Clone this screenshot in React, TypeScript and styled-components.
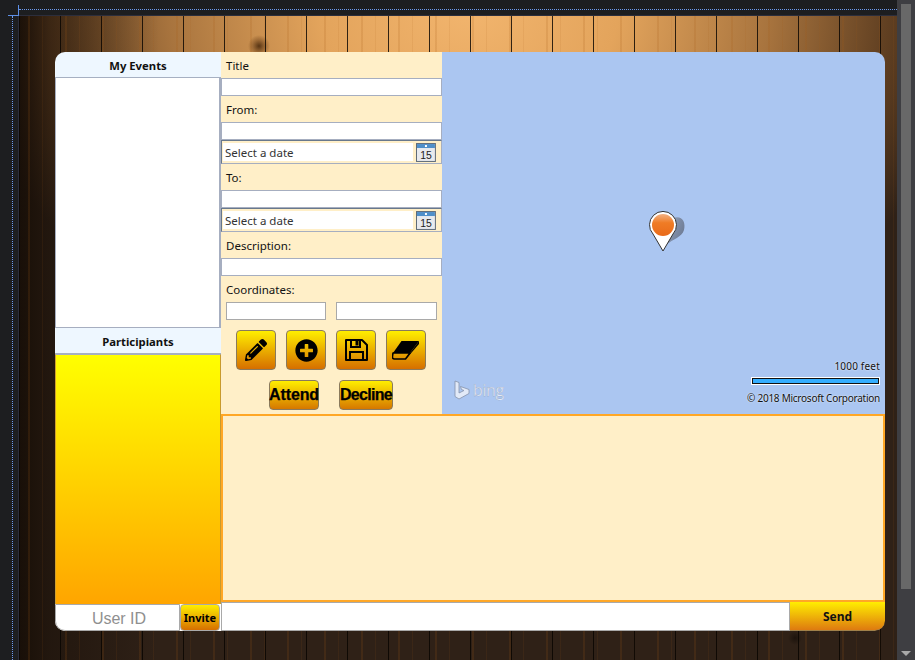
import React from "react";
import styled, { createGlobalStyle } from "styled-components";
import { FaPencilAlt, FaPlusCircle } from "react-icons/fa";

const Global = createGlobalStyle`
  html, body { margin: 0; padding: 0; height: 660px; overflow: hidden; background: #1d1e20; }
  * { box-sizing: border-box; }
  body { font-family: "Noto Sans", "Open Sans", sans-serif; font-size: 11.5px; color: #111; }
`;

const Shell = styled.div`
  width: 915px; height: 660px; display: grid;
  grid-template-columns: 19px 878px 18px;
  grid-template-rows: 16px 644px;
  background: #1d1e20;
`;
const Corner = styled.div`
  position: relative; background: #1d1e20;
  &::before { content: ""; position: absolute; left: 8px; right: 0; bottom: 0; border-bottom: 1px solid #5d8fe6; }
  &::after { content: ""; position: absolute; right: 0; top: 5px; bottom: 0; border-right: 1px solid #5d8fe6; }
`;
const TopRuler = styled.div`
  position: relative; background: #1d1e20; border-bottom: 1px solid #2c2e3c;
  &::after { content: ""; position: absolute; left: 0; right: 0; top: 9px; border-top: 1px dotted #6d9bf0; }
`;
const SideRuler = styled.div`
  position: relative; background: #1d1e20; border-right: 1px solid #2c2e3c;
  &::after { content: ""; position: absolute; left: 12px; top: 0; bottom: 0; border-left: 1px dotted #6d9bf0; }
`;
const Scroll = styled.div`
  grid-column: 3; grid-row: 1 / 3; position: relative; background: #3e3e42;
`;
const Thumb = styled.div`
  position: absolute; left: 4px; top: 4px; width: 10px; height: 585px; background: #686868;
`;
const Arrow = styled.div`
  position: absolute; left: 4px; bottom: 4px; width: 0; height: 0;
  border-left: 5px solid transparent; border-right: 5px solid transparent; border-top: 5px solid #a9a9a9;
`;

const Wood = styled.div`
  padding: 36px 0 0 36px;
  background:
    repeating-linear-gradient(90deg, rgba(8,4,0,.82) 0 1px, transparent 1px 41px),
    radial-gradient(circle 11px at 240px 30px, rgba(60,30,5,.8) 0, rgba(90,50,15,.4) 55%, rgba(120,70,20,0) 100%),
    radial-gradient(circle 7px at 776px 622px, rgba(10,5,2,.5) 0, rgba(10,5,2,0) 100%),
    repeating-linear-gradient(90deg, transparent 0 9px, rgba(165,90,20,.16) 9px 11px, transparent 11px 23px, rgba(165,90,20,.1) 23px 24px, transparent 24px 37px),
    linear-gradient(90deg, rgba(22,13,6,.9) 0, rgba(22,13,6,.5) 30px, rgba(22,13,6,0) 140px),
    radial-gradient(ellipse 500px 400px at 450px -10px, #f2b56e 0, #e3a45c 30%, #a8743e 60%, #5d3d20 85%, #2f2117 100%),
    #2f2117;
  background-color: #2f2117;
`;

const Panel = styled.div`
  width: 830px; height: 579px;
  display: grid; grid-template-columns: 166px 664px;
  border-radius: 10px; overflow: hidden;
`;
const LeftCol = styled.div`
  display: flex; flex-direction: column; width: 166px;
`;
const Head = styled.div`
  height: 26px; background: #eef7ff; border-bottom: 1px solid #a6b0c2; padding-top: 1px;
  display: flex; align-items: center; justify-content: center;
  font-weight: 700; font-size: 11.3px; color: #111;
`;
const EventList = styled.div`
  height: 250px; background: #fff; border: solid #a6aec0; border-width: 0 2px 1px 1px;
`;
const Yellow = styled.div`
  height: 250px; background: linear-gradient(180deg, #ffff00 0%, #ffa500 100%);
  border-right: 1px solid #c89a2e; border-left: 1px solid #d0a030; border-top: 1px solid #a6b0c2;
`;
const UserRow = styled.div`
  height: 27px; display: flex; align-items: stretch; background: #fff;
`;
const UserInput = styled.div`
  width: 125px; background: #fff; border: 1px solid #a9a9a9;
  border-bottom-left-radius: 10px; display: flex; align-items: center; justify-content: center;
  font-family: "Liberation Sans", Arial, sans-serif; font-size: 16px; color: #8f8f8f; padding: 2px 0 0 3px;
`;
const GoldBtn = styled.div<{ $w: number; $h: number }>`
  width: ${p => p.$w}px; height: ${p => p.$h}px; border-radius: 4px;
  background: linear-gradient(180deg, #ffee00 0%, #d66f00 100%);
  border: 1px solid #8a7a5c; display: flex; align-items: center; justify-content: center;
  color: #000; flex: none;
`;
const InviteBtn = styled(GoldBtn)`
  font-weight: 700; font-size: 11px; border-color: #aaa; margin-right: 1px;
`;

const RightCol = styled.div`
  display: grid; grid-template-rows: 362px 188px 29px; width: 664px;
`;
const TopRow = styled.div`
  display: grid; grid-template-columns: 221px 443px;
`;
const Form = styled.div`
  background: #ffefc8; display: flex; flex-direction: column; padding-bottom: 4px;
`;
const Label = styled.div`
  height: 26px; line-height: 27px; padding-left: 5px; color: #111;
`;
const Field = styled.div`
  height: 18px; width: 221px; background: #fff; border: 1px solid #a6aec0;
`;
const DateBox = styled.div`
  height: 24px; width: 221px; border: 1px solid #a6aec0; border-top: 1px solid #68788c;
  border-left-color: #68788c; background: #ffefc8; padding: 2px 5px 2px 1px;
  display: flex; align-items: center; gap: 3px;
`;
const DateText = styled.div`
  width: 191px; height: 18px; background: #fff; padding-left: 2px; line-height: 20px; color: #333;
`;
const CoordRow = styled.div`
  display: flex; gap: 10px; padding-left: 5px;
`;
const CoordField = styled.div<{ $w: number }>`
  width: ${p => p.$w}px; height: 18px; background: #fff; border: 1px solid #a9a9a9;
`;
const IconRow = styled.div`
  display: flex; gap: 10px; padding: 10px 0 0 15px;
`;
const WordRow = styled.div`
  display: flex; gap: 20px; padding: 10px 0 0 48px;
`;
const WordBtn = styled(GoldBtn)<{ $track: number }>`
  font-family: "Liberation Sans", Arial, sans-serif;
  font-weight: 700; font-size: 16px; letter-spacing: ${p => p.$track}px;
  -webkit-text-stroke: 0.25px #000;
  background: linear-gradient(180deg, #ffee00 0%, #d67800 100%);
`;

const MapArea = styled.div`
  position: relative; background: #abc6f1;
`;
const Pin = styled.svg`
  position: absolute; left: 205px; top: 158px;
`;
const Bing = styled.div`
  position: absolute; left: 12px; bottom: 14px; display: flex; align-items: center; gap: 3px;
`;
const BingWord = styled.span`
  font-family: "Open Sans", sans-serif; font-size: 16px; line-height: 20px; letter-spacing: -0.4px;
  color: #e2eaf8; -webkit-text-stroke: 0.25px #8793ab;
`;
const Scale = styled.div`
  position: absolute; right: 5px; bottom: 9px; display: flex; flex-direction: column; align-items: flex-end;
  font-size: 10px; color: #111; text-shadow: 0 0 2px #fff;
`;
const ScaleText = styled.div<{ $track: number }>`
  height: 14px; line-height: 14px; letter-spacing: ${p => p.$track}px;
`;
const ScaleBar = styled.div`
  width: 127px; height: 6px; margin: 5px 1px 7px 0; background: #35aeff; border: 1px solid #111; outline: 1px solid #fff;
`;

const Chat = styled.div`
  background: #ffefc8; border: 2px solid #ffa726;
`;
const SendRow = styled.div`
  display: flex; align-items: stretch;
`;
const MsgInput = styled.div`
  width: 569px; background: #fff; border: 1px solid #a9a9a9;
`;
const SendBtn = styled.div`
  width: 95px; border-bottom-right-radius: 10px;
  background: linear-gradient(180deg, #ffee00 0%, #de7a10 100%);
  display: flex; align-items: center; justify-content: center;
  font-weight: 700; font-size: 12px; color: #111; border-bottom: 1px solid #a0814a;
`;

const CalIcon = () => (
  <svg width="20" height="19" viewBox="0 0 20 19">
    <rect x="0.5" y="0.5" width="19" height="18" fill="#e8eaee" stroke="#5f6b78" />
    <rect x="1" y="1" width="18" height="4" fill="#4f8fc9" />
    <rect x="9" y="2" width="2" height="2" fill="#fff" />
    <text x="10" y="16" textAnchor="middle" fontSize="10.5" fontFamily="Liberation Sans" fill="#222">15</text>
  </svg>
);

const SaveIcon = () => (
  <svg width="24" height="24" viewBox="0 0 24 24" fill="none" stroke="#000" strokeWidth="2">
    <path d="M2 2 H18 L23 7 V22 H2 Z" strokeLinejoin="round" />
    <path d="M7 2.5 V9 H16 V2.5" />
    <rect x="11.5" y="3" width="3" height="4.5" fill="#000" stroke="none" />
    <path d="M6 22 V14 H19 V22" />
  </svg>
);

const EraserIcon = () => (
  <svg width="28" height="20" viewBox="0 0 28 20">
    <path d="M9.5 1 H27 L18 13 H1 Z" fill="#000" />
    <path d="M1 13 H18 L13.5 19 H2.5 Q0 19 0.5 16 Z" fill="none" stroke="#000" strokeWidth="1.6" strokeLinejoin="round" />
    <path d="M18 13 L27 1 V4 L14 19" fill="#000" />
  </svg>
);

const MapPin = () => (
  <Pin width="44" height="46" viewBox="0 0 44 46">
    <defs>
      <linearGradient id="o" x1="0" y1="0" x2="0" y2="1">
        <stop offset="0" stopColor="#f3b184" />
        <stop offset="0.4" stopColor="#ef7c25" />
        <stop offset="1" stopColor="#e96a1a" />
      </linearGradient>
      <linearGradient id="s" x1="0" y1="0" x2="1" y2="0.6">
        <stop offset="0" stopColor="#a2b3d0" />
        <stop offset="0.6" stopColor="#7d8ba5" />
        <stop offset="1" stopColor="#6d7a93" />
      </linearGradient>
    </defs>
    <path d="M26 8 C35 5 39 12 37 20 C35 27 26 29 19 35 Z" fill="url(#s)" />
    <path d="M16 41 L6 24 A13.5 13.5 0 1 1 26 24 Z" fill="#fff" stroke="#333" strokeWidth="1" strokeLinejoin="round" />
    <circle cx="16" cy="15" r="11" fill="url(#o)" />
  </Pin>
);

const BingLogo = () => (
  <svg width="16" height="20" viewBox="0 0 16 20">
    <path d="M1 1 L5 2.5 V13 L10 10.5 L7.5 9.5 L6.5 6.5 L15 9.5 V13.5 L5 19 L1 16.5 Z" fill="#e2eaf8" stroke="#8793ab" strokeWidth=".8" />
  </svg>
);

export default function App() {
  return (
    <Shell>
      <Global />
      <Corner />
      <TopRuler />
      <Scroll><Thumb /><Arrow /></Scroll>
      <SideRuler />
      <Wood>
        <Panel>
          <LeftCol>
            <Head>My Events</Head>
            <EventList />
            <Head>Participiants</Head>
            <Yellow />
            <UserRow>
              <UserInput>User ID</UserInput>
              <InviteBtn $w={40} $h={27}>Invite</InviteBtn>
            </UserRow>
          </LeftCol>
          <RightCol>
            <TopRow>
              <Form>
                <Label>Title</Label>
                <Field />
                <Label>From:</Label>
                <Field />
                <DateBox><DateText>Select a date</DateText><CalIcon /></DateBox>
                <Label>To:</Label>
                <Field />
                <DateBox><DateText>Select a date</DateText><CalIcon /></DateBox>
                <Label>Description:</Label>
                <Field />
                <Label>Coordinates:</Label>
                <CoordRow>
                  <CoordField $w={100} />
                  <CoordField $w={101} />
                </CoordRow>
                <IconRow>
                  <GoldBtn $w={40} $h={40}><FaPencilAlt size={22} /></GoldBtn>
                  <GoldBtn $w={40} $h={40}><FaPlusCircle size={23} /></GoldBtn>
                  <GoldBtn $w={40} $h={40}><SaveIcon /></GoldBtn>
                  <GoldBtn $w={40} $h={40}><EraserIcon /></GoldBtn>
                </IconRow>
                <WordRow>
                  <WordBtn $w={50} $h={30} $track={-0.1}>Attend</WordBtn>
                  <WordBtn $w={54} $h={30} $track={-0.7}>Decline</WordBtn>
                </WordRow>
              </Form>
              <MapArea>
                <MapPin />
                <Bing><BingLogo /><BingWord>bing</BingWord></Bing>
                <Scale>
                  <ScaleText $track={0.2}>1000 feet</ScaleText>
                  <ScaleBar />
                  <ScaleText $track={-0.25}>© 2018 Microsoft Corporation</ScaleText>
                </Scale>
              </MapArea>
            </TopRow>
            <Chat />
            <SendRow>
              <MsgInput />
              <SendBtn>Send</SendBtn>
            </SendRow>
          </RightCol>
        </Panel>
      </Wood>
    </Shell>
  );
}
